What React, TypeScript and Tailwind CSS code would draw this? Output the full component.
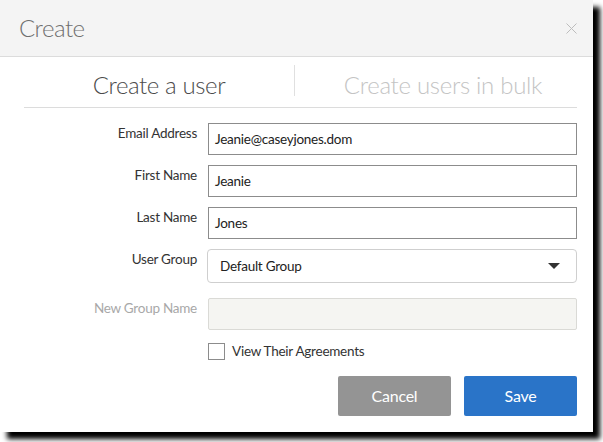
import React from "react";

const fields = [
  { label: "Email Address", value: "Jeanie@caseyjones.dom" },
  { label: "First Name", value: "Jeanie" },
  { label: "Last Name", value: "Jones" },
];

export default function App() {
  return (
    <div className="w-[603px] h-[442px] bg-white font-['Lato',sans-serif]">
      <div className="w-[593px] h-[432px] bg-white shadow-[7px_7px_5px_#000] flex flex-col">
        {/* header */}
        <div className="h-[57px] shrink-0 bg-[#f4f4f4] border-b border-[#dcdcdc] flex items-center justify-between pl-[19px] pr-[16px]">
          <span className="text-[24px] font-light text-[#6f6f6f] leading-none -mt-[1px] tracking-[-0.5px]">Create</span>
          <svg width="11" height="11" viewBox="0 0 11 11" className="mt-[1px]">
            <path d="M0.5 0.5 L10.5 10.5 M10.5 0.5 L0.5 10.5" stroke="#bdbdbd" strokeWidth="1" />
          </svg>
        </div>

        {/* tabs */}
        <div className="ml-[24px] mr-[16px] h-[51px] border-b border-[#dcdcdc] flex items-center">
          <div className="w-[270px] text-center text-[24px] font-light text-[#4b4b4b] tracking-[-0.4px] mt-[6px]">Create a user</div>
          <div className="w-px h-[31px] bg-[#e0e0e0] mt-[-4px]" />
          <div className="flex-1 text-center text-[24px] font-light text-[#c4c4c4] pl-[14px] tracking-[-0.3px] mt-[6px]">Create users in bulk</div>
        </div>

        {/* form */}
        <div className="ml-[24px] mr-[16px] mt-[15px] flex flex-col text-[13.5px] tracking-[-0.25px]">
          {fields.map((f) => (
            <div key={f.label} className="flex mb-[10px]">
              <div className="w-[173px] text-right text-[#333]">{f.label}</div>
              <div className="ml-[11px] flex-1 h-[32px] border border-[#8c8c8c] flex items-center px-[6px] text-[#222]">
                {f.value}
              </div>
            </div>
          ))}

          <div className="flex">
            <div className="w-[173px] text-right text-[#333]">User Group</div>
            <div className="ml-[10px] flex-1 h-[34px] border border-[#cfcfcf] rounded-[4px] flex items-center justify-between pl-[12px] pr-[16px] text-[#222]">
              <span>Default Group</span>
              <svg width="12" height="6" viewBox="0 0 12 6">
                <path d="M0 0 L12 0 L6 6 Z" fill="#333" />
              </svg>
            </div>
          </div>

          <div className="flex mt-[15px]">
            <div className="w-[173px] text-right text-[#a8a8a8]">New Group Name</div>
            <div className="ml-[11px] flex-1 h-[32px] border border-[#dadad6] rounded-[2px] bg-[#f5f5f2]" />
          </div>

          <div className="flex items-center mt-[11px] ml-[184px]">
            <div className="w-[17px] h-[17px] border border-[#8c8c8c] bg-white" />
            <span className="ml-[7px] text-[#333]">View Their Agreements</span>
          </div>

          <div className="flex justify-end gap-[13px] mt-[15px]">
            <button className="w-[113px] h-[40px] rounded-[2px] bg-[#949494] text-white text-[16px]">Cancel</button>
            <button className="w-[113px] h-[40px] rounded-[2px] bg-[#2a74c8] text-white text-[16px]">Save</button>
          </div>
        </div>
      </div>
    </div>
  );
}
